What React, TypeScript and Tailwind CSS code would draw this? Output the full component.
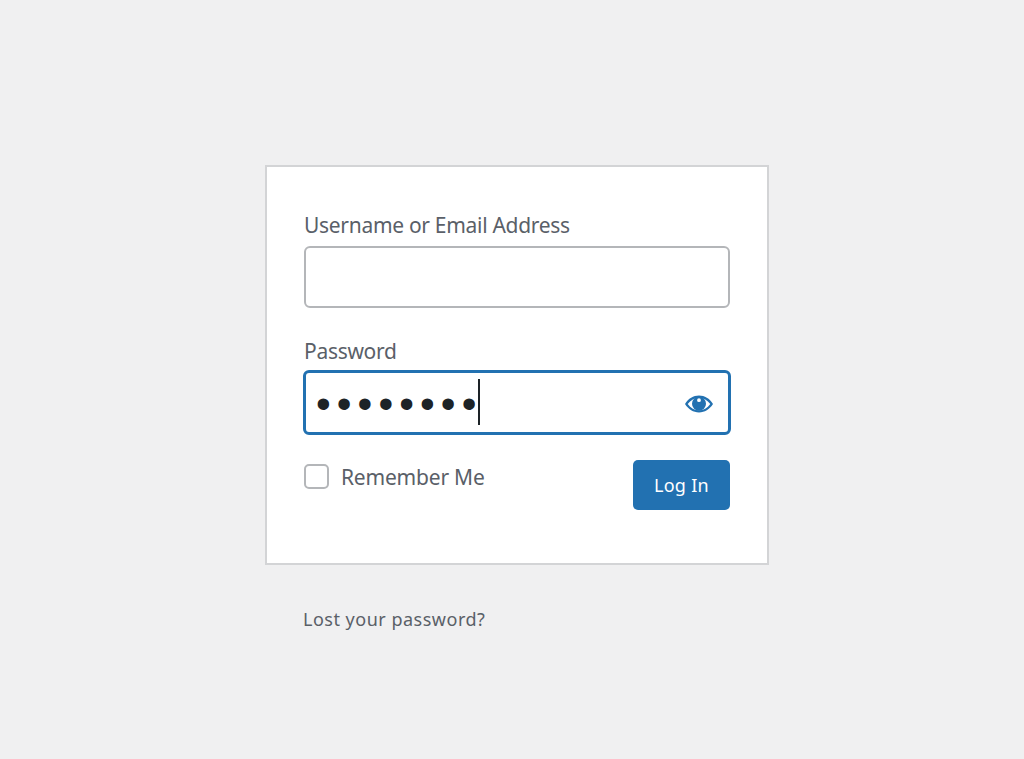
function EyeIcon() {
  return (
    <svg viewBox="0 0 30 20" className="w-[30px] h-5 text-[#2271b1]" fill="currentColor">
      <path
        fillRule="evenodd"
        d="M1 10C4.500 4.600 9.300 1.600 15 1.600S25.500 4.600 29 10c-3.500 5.400-8.300 8.400-14 8.400S4.500 15.400 1 10Zm2.700 0c3 4 6.800 6.300 11.300 6.300S23.300 14 26.300 10C23.300 6 19.500 3.700 15 3.700S6.700 6 3.700 10Z"
      />
      <path
        fillRule="evenodd"
        d="M15 2.800a7 7 0 1 1 0 14a7 7 0 0 1 0-14Zm0 1.500a1.900 1.900 0 1 0 0 3.800a1.900 1.900 0 0 0 0-3.800Z"
      />
    </svg>
  );
}

export default function App() {
  return (
    <div className="min-h-[759px] bg-[#f0f0f1] pt-[165px] pl-[265px] font-['Noto_Sans',sans-serif] text-[#5a6068] overflow-hidden">
      <form className="w-[504px] h-[400px] bg-white border-2 border-[#d3d4d6] pt-[43px] pl-[36px] pr-[36px]">
        <label className="block text-[21px] leading-[30px] tracking-[-0.3px] mb-[6px] ml-[1px]">
          Username or Email Address
        </label>
        <div className="h-[62px] w-[426px] ml-[1px] bg-white border-2 border-[#b4b6b9] rounded-[6px]" />

        <label className="block text-[21px] leading-[30px] tracking-[-0.3px] mt-[28px] mb-[4px] ml-[1px]">
          Password
        </label>
        <div className="h-[65px] w-[428px] bg-white border-[3px] border-[#2271b1] rounded-[6px] flex items-center pl-[10px] pr-[14px]">
          <span className="font-['Liberation_Sans',sans-serif] text-[42px] leading-none tracking-[6.100px] pt-[2px] text-[#1d2327]">
            ••••••••
          </span>
          <span className="w-[2px] h-[46px] -mt-[1px] bg-[#1d2327] -ml-[4px]" />
          <span className="ml-auto pt-[2px]">
            <EyeIcon />
          </span>
        </div>

        <div className="flex items-start justify-between mt-[25px] ml-[1px] w-[426px]">
          <label className="flex items-center mt-[2px]">
            <span className="w-[25px] h-[25px] mb-[2px] bg-white border-2 border-[#b4b6b9] rounded-[5px]" />
            <span className="ml-[12px] text-[21px] leading-[30px] tracking-[-0.2px]">Remember Me</span>
          </label>
          <button
            type="button"
            className="w-[97px] h-[50px] bg-[#2271b1] rounded-[5px] text-white text-[18px] tracking-[0.3px]"
          >
            Log In
          </button>
        </div>
      </form>

      <a className="block mt-[41px] ml-[38px] text-[18px] leading-[26px] tracking-[0.5px]">Lost your password?</a>
    </div>
  );
}
